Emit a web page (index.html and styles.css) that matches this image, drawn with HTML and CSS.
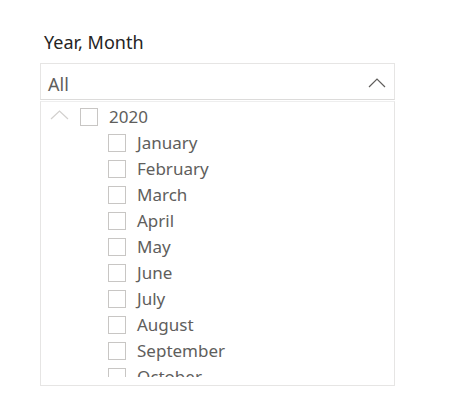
FILE: index.html
```html
<!DOCTYPE html>
<html>
<head>
<meta charset="utf-8">
<link rel="stylesheet" href="styles.css">
</head>
<body>
<div class="slicer">
  <div class="title">Year, Month</div>
  <div class="header">
    <span class="value">All</span>
    <svg class="chev" width="18" height="11" viewBox="0 0 18 11"><path d="M1 10 L9 2 L17 10" fill="none" stroke="#605e5c" stroke-width="1.2"/></svg>
  </div>
  <div class="panel">
    <div class="list">
      <div class="row year">
        <svg class="ychev" width="19" height="10" viewBox="0 0 19 10"><path d="M1 9 L9.5 1 L18 9" fill="none" stroke="#d2d0ce" stroke-width="1.2"/></svg>
        <span class="box"></span>
        <span class="label">2020</span>
      </div>
      <div class="row month"><span class="box"></span><span class="label">January</span></div>
      <div class="row month"><span class="box"></span><span class="label">February</span></div>
      <div class="row month"><span class="box"></span><span class="label">March</span></div>
      <div class="row month"><span class="box"></span><span class="label">April</span></div>
      <div class="row month"><span class="box"></span><span class="label">May</span></div>
      <div class="row month"><span class="box"></span><span class="label">June</span></div>
      <div class="row month"><span class="box"></span><span class="label">July</span></div>
      <div class="row month"><span class="box"></span><span class="label">August</span></div>
      <div class="row month"><span class="box"></span><span class="label">September</span></div>
      <div class="row month"><span class="box"></span><span class="label">October</span></div>
    </div>
  </div>
</div>
</body>
</html>
```
FILE: styles.css
```css
html, body {
  margin: 0;
  padding: 0;
  background: #ffffff;
}
body {
  font-family: "Noto Sans", "Open Sans", sans-serif;
  color: #605e5c;
}
.slicer {
  margin-left: 40px;
  width: 355px;
  padding-top: 29px;
}
.title {
  padding-left: 4px;
  padding-top: 0;
  font-size: 18px;
  line-height: 26px;
  color: #252423;
  height: 34px;
}
.header {
  box-sizing: border-box;
  height: 37px;
  border: 1px solid #e6e5e4;
  border-bottom-color: #dcdbda;
  display: flex;
  align-items: center;
  justify-content: space-between;
  padding: 0 8px 0 7px;
}
.value {
  font-size: 18px;
  line-height: 20px;
  padding-top: 4px;
}
.chev {
  display: block;
  margin-top: 1px;
}
.panel {
  box-sizing: border-box;
  margin-top: 1px;
  height: 285px;
  border: 1px solid #e6e5e4;
  border-top-color: #eeeeee;
  padding: 2px 0 7px;
}
.list {
  height: 273px;
  overflow: hidden;
}
.row {
  display: flex;
  align-items: center;
  height: 26px;
}
.year {
  padding-left: 9px;
}
.ychev {
  display: block;
  margin-top: -5px;
  margin-right: 11px;
}
.month {
  padding-left: 67px;
}
.box {
  box-sizing: border-box;
  width: 18px;
  height: 18px;
  border: 1px solid #c8c6c4;
  flex: none;
}
.label {
  margin-left: 11px;
  font-size: 17px;
  line-height: 22px;
}
```
